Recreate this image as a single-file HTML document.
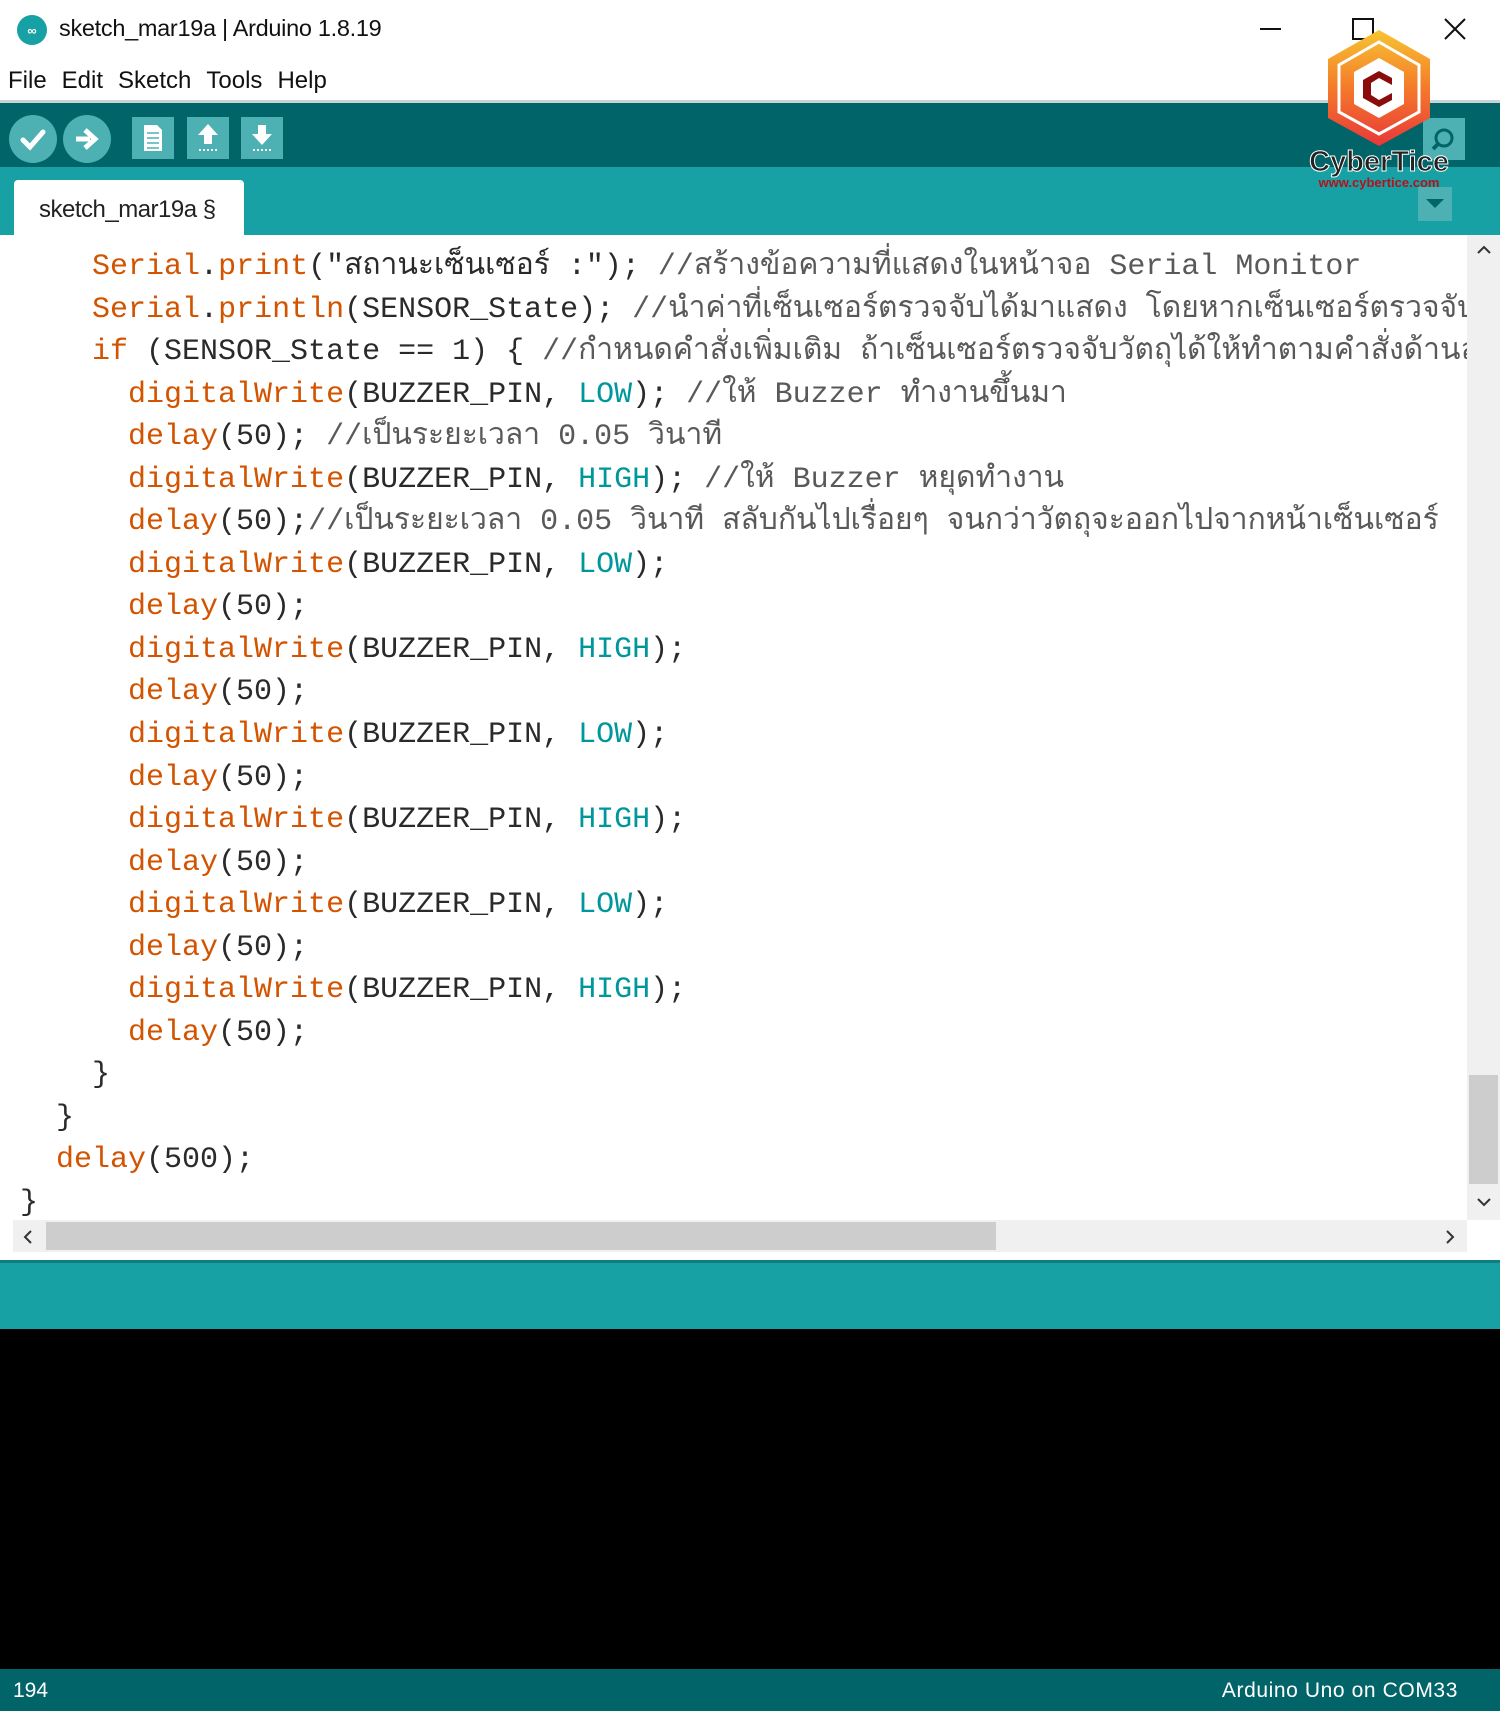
<!DOCTYPE html>
<html><head><meta charset="utf-8">
<style>
*{margin:0;padding:0;box-sizing:border-box}
body{width:1500px;height:1711px;overflow:hidden;background:#fff;font-family:"Liberation Sans",sans-serif;position:relative}
.abs{position:absolute}
#title{left:0;top:0;width:1500px;height:58px;background:#fff}
#title .t{left:59px;top:15px;font-size:23.5px;color:#111;letter-spacing:-0.3px}
#menu{top:67px;left:8px;font-size:24px;color:#111}
#menu span{margin-right:15px}
#toolbar{left:0;top:100px;width:1500px;height:67px;background:#006468;border-top:3px solid #c9d4d4}
.cb{width:48px;height:48px;border-radius:50%;background:#4db0b3;top:12px}
.sb{width:42px;height:42px;background:#4db0b3;top:14px}
#tabbar{left:0;top:167px;width:1500px;height:68px;background:#17a1a5}
#tab{left:14px;top:13px;width:230px;height:55px;background:#fff;border-radius:4px 4px 0 0;font-size:24px;color:#222;padding:16px 0 0 25px;letter-spacing:-0.5px}
#code{left:20px;top:246px;font-family:"Liberation Mono","DejaVu Sans Mono",monospace;font-size:30px;line-height:42.55px;color:#2a2a2a;white-space:pre}
.k{color:#d35400}.c{color:#00979c}.m{color:#595959}
#vs{left:1467px;top:235px;width:33px;height:985px;background:#f0f0f0}
#hs{left:13px;top:1220px;width:1454px;height:32px;background:#f0f0f0}
#status{left:0;top:1260px;width:1500px;height:69px;background:#17a1a5;border-top:3px solid #0d7f83}
#console{left:0;top:1329px;width:1500px;height:340px;background:#000}
#bottom{left:0;top:1669px;width:1500px;height:42px;background:#006468;color:#fff;font-size:21px}
</style></head><body>
<div id="title" class="abs">
  <svg class="abs" style="left:16px;top:14px" width="32" height="32"><circle cx="16" cy="16" r="15" fill="#17a1a5"/><text x="16" y="21" font-size="13" fill="#fff" text-anchor="middle" font-family="Liberation Sans" font-weight="bold">∞</text></svg>
  <div class="abs t">sketch_mar19a | Arduino 1.8.19</div>
  <svg class="abs" style="left:1250px;top:14px" width="230" height="30"><line x1="10" y1="15" x2="31" y2="15" stroke="#111" stroke-width="2"/><rect x="103" y="5" width="20" height="20" fill="none" stroke="#111" stroke-width="2"/><path d="M195 5 L215 25 M215 5 L195 25" stroke="#111" stroke-width="2"/></svg>
</div>
<div id="menu" class="abs"><span>File</span><span>Edit</span><span>Sketch</span><span>Tools</span><span>Help</span></div>
<div id="toolbar" class="abs">
  <div class="abs cb" style="left:9px"><svg width="48" height="48"><path d="M14 25 L21 32 L34 17" stroke="#fff" stroke-width="5" fill="none" stroke-linecap="round"/></svg></div>
  <div class="abs cb" style="left:63px"><svg width="48" height="48"><path d="M13 24 H27 M22 15 L32 24 L22 33" stroke="#fff" stroke-width="5" fill="none"/></svg></div>
  <div class="abs sb" style="left:132px"><svg width="42" height="42"><path d="M12 8 H25 L30 13 V34 H12Z" fill="#fff"/><path d="M15 16H27M15 21H27M15 26H27M15 31H27" stroke="#4db0b3" stroke-width="1.5"/></svg></div>
  <div class="abs sb" style="left:187px"><svg width="42" height="42"><path d="M21 7 L31 18 H25 V27 H17 V18 H11Z" fill="#fff"/><path d="M12 33H30" stroke="#fff" stroke-width="2" stroke-dasharray="2 2"/></svg></div>
  <div class="abs sb" style="left:241px"><svg width="42" height="42"><path d="M21 28 L31 17 H25 V8 H17 V17 H11Z" fill="#fff"/><path d="M12 33H30" stroke="#fff" stroke-width="2" stroke-dasharray="2 2"/></svg></div>
  <div class="abs sb" style="left:1423px;top:15px"><svg width="42" height="42"><circle cx="21" cy="20" r="8" stroke="#006468" stroke-width="3" fill="none"/><path d="M15 26 L10 31" stroke="#006468" stroke-width="4"/></svg></div>
</div>
<div id="tabbar" class="abs">
  <div id="tab" class="abs">sketch_mar19a §</div>
  <div class="abs" style="left:1418px;top:20px;width:34px;height:34px;background:#4db0b3"><svg width="34" height="34"><path d="M8 12 H26 L17 21Z" fill="#006468"/></svg></div>
</div>
<div id="code" class="abs">    <span class="k">Serial</span>.<span class="k">print</span>("สถานะเซ็นเซอร์ :"); <span class="m">//สร้างข้อความที่แสดงในหน้าจอ Serial Monitor</span>
    <span class="k">Serial</span>.<span class="k">println</span>(SENSOR_State); <span class="m">//นำค่าที่เซ็นเซอร์ตรวจจับได้มาแสดง โดยหากเซ็นเซอร์ตรวจจับ</span>
    <span class="k">if</span> (SENSOR_State == 1) { <span class="m">//กำหนดคำสั่งเพิ่มเติม ถ้าเซ็นเซอร์ตรวจจับวัตถุได้ให้ทำตามคำสั่งด้านล่าง</span>
      <span class="k">digitalWrite</span>(BUZZER_PIN, <span class="c">LOW</span>); <span class="m">//ให้ Buzzer ทำงานขึ้นมา</span>
      <span class="k">delay</span>(50); <span class="m">//เป็นระยะเวลา 0.05 วินาที</span>
      <span class="k">digitalWrite</span>(BUZZER_PIN, <span class="c">HIGH</span>); <span class="m">//ให้ Buzzer หยุดทำงาน</span>
      <span class="k">delay</span>(50);<span class="m">//เป็นระยะเวลา 0.05 วินาที สลับกันไปเรื่อยๆ จนกว่าวัตถุจะออกไปจากหน้าเซ็นเซอร์</span>
      <span class="k">digitalWrite</span>(BUZZER_PIN, <span class="c">LOW</span>);
      <span class="k">delay</span>(50);
      <span class="k">digitalWrite</span>(BUZZER_PIN, <span class="c">HIGH</span>);
      <span class="k">delay</span>(50);
      <span class="k">digitalWrite</span>(BUZZER_PIN, <span class="c">LOW</span>);
      <span class="k">delay</span>(50);
      <span class="k">digitalWrite</span>(BUZZER_PIN, <span class="c">HIGH</span>);
      <span class="k">delay</span>(50);
      <span class="k">digitalWrite</span>(BUZZER_PIN, <span class="c">LOW</span>);
      <span class="k">delay</span>(50);
      <span class="k">digitalWrite</span>(BUZZER_PIN, <span class="c">HIGH</span>);
      <span class="k">delay</span>(50);
    }
  }
  <span class="k">delay</span>(500);
}</div>
<div id="vs" class="abs">
  <svg class="abs" style="left:8px;top:8px" width="18" height="14"><path d="M3 10 L9 4 L15 10" stroke="#333" stroke-width="2" fill="none"/></svg>
  <div class="abs" style="left:2px;top:840px;width:29px;height:109px;background:#cdcdcd"></div>
  <svg class="abs" style="left:8px;top:960px" width="18" height="14"><path d="M3 4 L9 10 L15 4" stroke="#333" stroke-width="2" fill="none"/></svg>
</div>
<div id="hs" class="abs">
  <svg class="abs" style="left:8px;top:8px" width="14" height="18"><path d="M10 3 L4 9 L10 15" stroke="#333" stroke-width="2" fill="none"/></svg>
  <div class="abs" style="left:33px;top:2px;width:950px;height:28px;background:#cdcdcd"></div>
  <svg class="abs" style="left:1430px;top:8px" width="14" height="18"><path d="M4 3 L10 9 L4 15" stroke="#333" stroke-width="2" fill="none"/></svg>
</div>
<div id="status" class="abs"></div>
<div id="console" class="abs"></div>
<div id="bottom" class="abs"><span class="abs" style="left:13px;top:10px">194</span><span class="abs" style="right:42px;top:10px;letter-spacing:0.6px">Arduino Uno on COM33</span></div>
<svg class="abs" style="left:1300px;top:28px" width="160" height="165">
  <defs><linearGradient id="g" x1="0" y1="0" x2="0" y2="1"><stop offset="0" stop-color="#f7c531"/><stop offset="0.5" stop-color="#f47a2a"/><stop offset="1" stop-color="#e8373a"/></linearGradient></defs>
  <polygon points="79,2 130,31 130,90 79,118 28,90 28,31" fill="url(#g)"/>
  <polygon points="79,14 119,37 119,84 79,106 39,84 39,37" fill="none" stroke="#fff" stroke-width="3"/>
  <polygon points="79,30 104,44 104,76 79,90 54,76 54,44" fill="#fff"/>
  <path d="M92 50 L79 43 L63 52 L63 70 L79 79 L92 72 L92 65 L79 72 L71 67 L71 55 L79 50 L92 57Z" fill="#8b0c0c"/>
  <text x="79" y="143" font-family="Liberation Sans" font-weight="bold" font-size="29" text-anchor="middle" fill="#222" stroke="#fff" stroke-width="1">CyberTice</text>
  <text x="79" y="159" font-family="Liberation Sans" font-weight="bold" font-size="13" text-anchor="middle" fill="#b3121a">www.cybertice.com</text>
</svg>
</body></html>
